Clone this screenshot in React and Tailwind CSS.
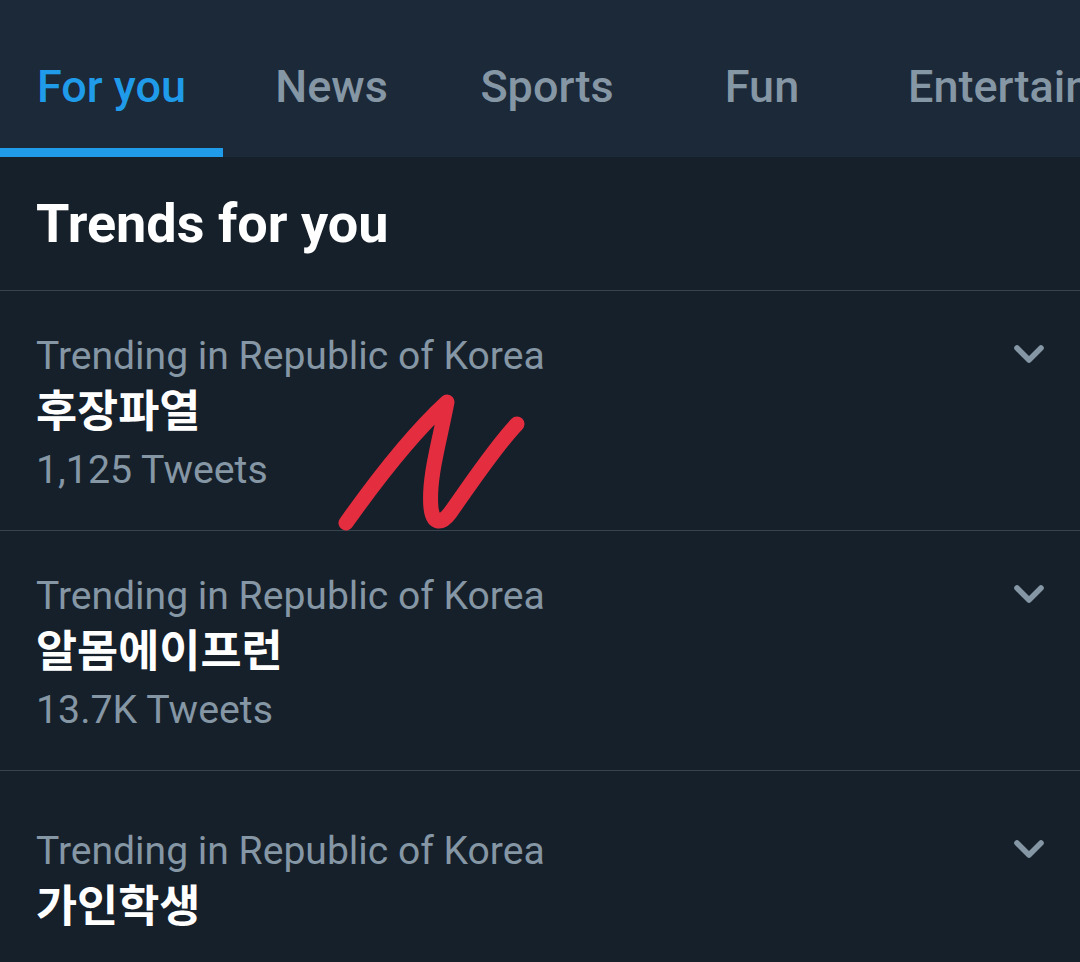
import { ChevronDown } from "lucide-react";

const tabs = [
  { name: "For you", width: "w-[223px] justify-center", active: true },
  { name: "News", width: "w-[217px] justify-center" },
  { name: "Sports", width: "w-[214px] justify-center" },
  { name: "Fun", width: "w-[216px] justify-center" },
  { name: "Entertainment", width: "w-[400px] pl-[38px]" },
];

const trends = [
  { title: "후장파열", count: "1,125 Tweets", top: "pt-[45px]", chevron: "top-[39px]" },
  { title: "알몸에이프런", count: "13.7K Tweets", top: "pt-[45px]", chevron: "top-[39px]" },
  { title: "가인학생", top: "pt-[60px]", chevron: "top-[54px]" },
];

const TrendRow = ({ trend }) => (
  <div className={`relative h-[240px] border-b border-[#38444d] px-[36px] ${trend.top}`}>
    <div className="text-[39.1px] leading-[41px] text-[#8596a5]">Trending in Republic of Korea</div>
    <div className="mt-[10px] text-[44.7px] leading-[50px] font-bold text-white">{trend.title}</div>
    {trend.count && (
      <div className="mt-[13px] text-[39.3px] leading-[41px] text-[#8596a5]">{trend.count}</div>
    )}
    <ChevronDown
      className={`absolute right-[27px] h-[48px] w-[48px] text-[#8596a5] ${trend.chevron}`}
      strokeWidth={2.8}
    />
  </div>
);

export default function App() {
  return (
    <div className="relative h-[962px] w-[1080px] overflow-hidden bg-[#16202a] font-['Roboto','Noto_Sans_CJK_KR',sans-serif]">
      {/* Tabs */}
      <div className="flex h-[157px] overflow-hidden bg-[#1c2938]">
        {tabs.map((tab) => (
          <div
            key={tab.name}
            className={`relative flex shrink-0 pt-[63px] text-[45px] leading-[48px] font-medium ${tab.width} ${
              tab.active ? "text-[#1f9bea]" : "text-[#8596a5]"
            }`}
          >
            {tab.name}
            {tab.active && <span className="absolute inset-x-0 bottom-0 h-[9px] bg-[#1f9bea]"></span>}
          </div>
        ))}
      </div>

      {/* Header */}
      <div className="flex h-[134px] items-center border-b border-[#38444d] px-[36px]">
        <h1 className="text-[54px] leading-[60px] font-bold text-white">Trends for you</h1>
      </div>

      {trends.map((trend) => (
        <TrendRow key={trend.title} trend={trend} />
      ))}

      {/* Red pen scribble */}
      <svg className="absolute top-0 left-0" width="1080" height="962" fill="none">
        <path
          d="M346 523 C375 482 410 436 447 402 C440 440 428 478 431 508 C433 525 442 524 450 513 C470 485 495 447 517 424"
          stroke="#e52d40"
          strokeWidth="15"
          strokeLinecap="round"
          strokeLinejoin="round"
        />
      </svg>
    </div>
  );
}
